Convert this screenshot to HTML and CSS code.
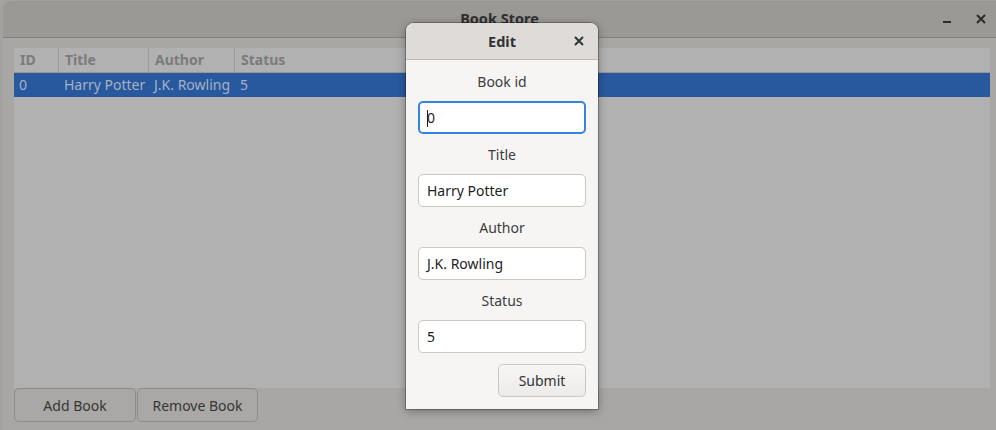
FILE: index.html
```html
<!DOCTYPE html>
<html>
<head>
<meta charset="utf-8">
<link rel="stylesheet" href="styles.css">
</head>
<body>
<div class="window">
  <div class="titlebar">
    <div class="title">Book Store</div>
    <div class="controls">
      <svg class="ctl" width="16" height="16" viewBox="0 0 16 16"><rect x="4" y="10" width="8" height="2" fill="#2b2b2b"/></svg>
      <svg class="ctl" width="16" height="16" viewBox="0 0 16 16"><path d="M4 4 L12 12 M12 4 L4 12" stroke="#2b2b2b" stroke-width="2" fill="none"/></svg>
    </div>
  </div>
  <div class="content">
    <div class="tree">
      <div class="thead">
        <div class="th c-id">ID</div>
        <div class="th c-title">Title</div>
        <div class="th c-author">Author</div>
        <div class="th c-status">Status</div>
      </div>
      <div class="trow selected">
        <div class="td c-id">0</div>
        <div class="td c-title">Harry Potter</div>
        <div class="td c-author">J.K. Rowling</div>
        <div class="td c-status">5</div>
      </div>
    </div>
    <div class="actions">
      <button class="btn add">Add Book</button>
      <button class="btn remove">Remove Book</button>
    </div>
  </div>
</div>

<div class="dialog">
  <div class="dlg-head">
    <div class="dlg-title">Edit</div>
    <svg class="dlg-close" width="12" height="12" viewBox="0 0 12 12"><path d="M2 2 L10 10 M10 2 L2 10" stroke="#2e3436" stroke-width="2" fill="none"/></svg>
  </div>
  <div class="dlg-body">
    <div class="label">Book id</div>
    <div class="entry focused"><span class="caret"></span>0</div>
    <div class="label">Title</div>
    <div class="entry">Harry Potter</div>
    <div class="label">Author</div>
    <div class="entry">J.K. Rowling</div>
    <div class="label">Status</div>
    <div class="entry">5</div>
    <div class="submit-row"><button class="submit">Submit</button></div>
  </div>
</div>
</body>
</html>
```
FILE: styles.css
```css
html, body {
  margin: 0;
  padding: 0;
}
body {
  width: 996px;
  height: 430px;
  overflow: hidden;
  background: #a3a2a0;
  font-family: "Noto Sans", "Open Sans", sans-serif;
  font-size: 14px;
  position: relative;
}
.window {
  margin: 1px 0 0 3px;
  height: 429px;
  background: #a8a7a5;
  border-radius: 8px 0 0 0;
  display: flex;
  flex-direction: column;
}
.titlebar {
  height: 36px;
  flex: none;
  background: #9b9995;
  border-bottom: 1px solid #83817e;
  border-radius: 8px 0 0 0;
  position: relative;
  display: flex;
  align-items: center;
  justify-content: center;
}
.title {
  font-weight: bold;
  color: #2f2f2f;
  font-size: 14.5px;
  margin-top: -3px;
}
.controls {
  position: absolute;
  right: 7px;
  top: 10px;
  display: flex;
  gap: 18px;
}
.content {
  flex: 1;
  padding: 10px 6px 0 11px;
  display: flex;
  flex-direction: column;
}
.tree {
  height: 340px;
  background: #b1b1b1;
}
.thead {
  height: 24px;
  display: flex;
  border-bottom: 1px solid #979797;
}
.th {
  font-weight: bold;
  color: #7b7b7b;
  line-height: 24px;
  padding-left: 6px;
  box-sizing: border-box;
  border-right: 1px solid #9c9c9c;
}
.th.c-status { border-right: none; }
.c-id { width: 45px; }
.c-title { width: 90px; }
.c-author { width: 86px; }
.c-status { flex: 1; }
.trow {
  height: 24px;
  display: flex;
}
.trow.selected {
  background: #28599e;
}
.td {
  color: #a6b2c4;
  line-height: 24px;
  padding-left: 5px;
  box-sizing: border-box;
}
.actions {
  display: flex;
  gap: 1px;
}
.btn {
  height: 34px;
  font-family: inherit;
  font-size: 14px;
  color: #363636;
  background: #a9a8a6;
  border: 1px solid #8e8c89;
  border-radius: 5px;
  padding: 0;
}
.btn.add { width: 122px; }
.btn.remove { width: 121px; }

.dialog {
  position: absolute;
  left: 406px;
  top: 23px;
  width: 192px;
  height: 386px;
  background: #f6f5f4;
  border-radius: 8px 8px 0 0;
  box-shadow: 0 0 0 1px rgba(0,0,0,0.25), 0 2px 10px rgba(0,0,0,0.35);
  display: flex;
  flex-direction: column;
}
.dlg-head {
  height: 36px;
  flex: none;
  background: #dedbd8;
  border-bottom: 1px solid #bdb9b4;
  border-radius: 8px 8px 0 0;
  display: flex;
  align-items: center;
  justify-content: center;
  position: relative;
}
.dlg-title {
  font-weight: bold;
  color: #2e3436;
  font-size: 14.5px;
}
.dlg-close {
  position: absolute;
  right: 13px;
  top: 12px;
}
.dlg-body {
  padding: 11px 12px 12px 12px;
  display: flex;
  flex-direction: column;
}
.label {
  height: 20px;
  line-height: 22px;
  text-align: center;
  color: #3a3d3e;
  margin: 0 0 10px 0;
}
.entry + .label {
  margin-top: 10px;
}
.entry {
  height: 33px;
  box-sizing: border-box;
  background: #ffffff;
  border: 1px solid #cdc7c2;
  border-radius: 5px;
  padding-left: 8px;
  line-height: 31px;
  color: #1e1e1e;
  position: relative;
}
.entry.focused {
  border: 2px solid #3584e4;
  padding-left: 7px;
  line-height: 29px;
}
.caret {
  position: absolute;
  left: 7px;
  top: 7px;
  width: 1px;
  height: 17px;
  background: #1e1e1e;
}
.submit-row {
  display: flex;
  justify-content: flex-end;
  margin-top: 11px;
}
.submit {
  width: 88px;
  height: 33px;
  font-family: inherit;
  font-size: 14px;
  color: #2e3436;
  background: linear-gradient(#f7f6f5, #edebe9);
  border: 1px solid #cdc7c2;
  border-radius: 5px;
  padding: 0;
}
```
